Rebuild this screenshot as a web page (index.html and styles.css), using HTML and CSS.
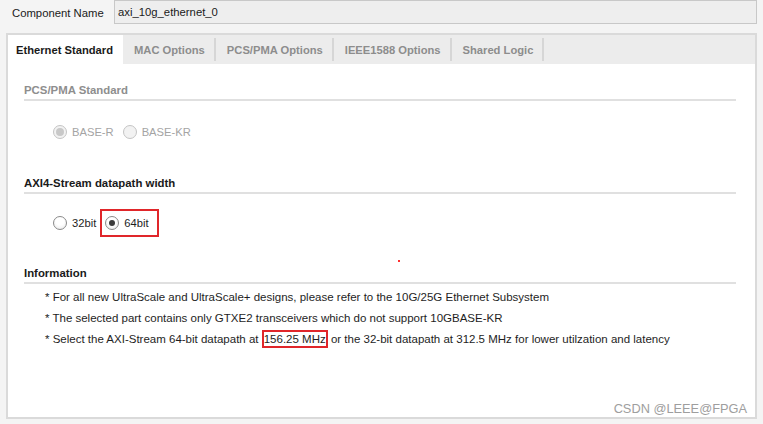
FILE: index.html
```html
<!DOCTYPE html>
<html>
<head>
<meta charset="utf-8">
<link rel="stylesheet" href="styles.css">
</head>
<body>
<div class="page">
  <div class="name-row">
    <span class="name-label">Component Name</span>
    <div class="name-input">axi_10g_ethernet_0</div>
  </div>
  <div class="panel">
    <div class="tabbar">
      <div class="tab active">Ethernet Standard</div>
      <div class="tab">MAC Options</div>
      <div class="tab">PCS/PMA Options</div>
      <div class="tab">IEEE1588 Options</div>
      <div class="tab">Shared Logic</div>
    </div>
    <div class="content">
      <div class="group disabled">
        <div class="group-title">PCS/PMA Standard</div>
        <div class="radios first">
          <span class="radio checked"><span class="dot"></span>BASE-R</span>
          <span class="radio"><span class="dot"></span>BASE-KR</span>
        </div>
      </div>
      <div class="group">
        <div class="group-title">AXI4-Stream datapath width</div>
        <div class="radios second">
          <span class="radio"><span class="dot"></span>32bit</span>
          <span class="radio checked boxed"><span class="dot"></span>64bit</span>
        </div>
      </div>
      <div class="group info">
        <div class="group-title">Information</div>
        <div class="info-lines">
          <p>* For all new UltraScale and UltraScale+ designs, please refer to the 10G/25G Ethernet Subsystem</p>
          <p>* The selected part contains only GTXE2 transceivers which do not support 10GBASE-KR</p>
          <p>* Select the AXI-Stream 64-bit datapath at <span class="hl">156.25 MHz</span> or the 32-bit datapath at 312.5 MHz for lower utilzation and latency</p>
        </div>
      </div>
    </div>
  </div>
  <span class="red-dot"></span>
  <div class="watermark">CSDN @LEEE@FPGA</div>
</div>
</body>
</html>
```

FILE: styles.css
```css
html, body {
  margin: 0;
  padding: 0;
}
body {
  background: #f4f4f4;
  font-family: "Liberation Sans", Arial, sans-serif;
  font-size: 11px;
  color: #1e1e1e;
}
.page {
  position: relative;
  width: 763px;
  height: 424px;
  overflow: hidden;
}
.name-row {
  display: flex;
  align-items: center;
  height: 25px;
  padding: 0 6px 0 12px;
}
.name-label {
  width: 102px;
  font-size: 11.3px;
  color: #1a1a1a;
}
.name-input {
  flex: 1;
  height: 24px;
  box-sizing: border-box;
  border: 1px solid #c8c8c8;
  background: #eeeeee;
  padding-left: 3px;
  line-height: 22px;
  font-size: 11.3px;
  color: #1a1a1a;
  align-self: flex-start;
}
.panel {
  margin: 8px 6px 0 6px;
  height: 386px;
  box-sizing: border-box;
  border: 2px solid #dadada;
  background: #ffffff;
  display: flex;
  flex-direction: column;
}
.tabbar {
  display: flex;
  height: 29px;
  background: #ececec;
  flex-shrink: 0;
}
.tab {
  display: flex;
  align-items: center;
  padding: 0 11px 0 11px;
  font-weight: bold;
  font-size: 11.2px;
  color: #8d8d8d;
  position: relative;
}
.tab::after {
  content: "";
  position: absolute;
  right: 0;
  top: 3px;
  bottom: 3px;
  width: 2px;
  background: #d6d6d6;
}
.tab.active {
  background: #ffffff;
  color: #1a1a1a;
  padding: 0 10px 0 8px;
}
.tab.active::after {
  display: none;
}
.content {
  flex: 1;
  padding: 19px 19px 0 16px;
}
.group-title {
  font-weight: bold;
  font-size: 11.4px;
  line-height: 14px;
  padding-bottom: 2px;
  border-bottom: 2px solid #e0e0e0;
  color: #1a1a1a;
}
.group.disabled .group-title {
  color: #8e8e8e;
}
.radios {
  display: flex;
  margin-left: 24px;
}
.radios.first {
  margin-top: 17px;
  margin-bottom: 30px;
}
.radios.second {
  margin-top: 15px;
}
.radio {
  display: inline-flex;
  align-items: center;
  gap: 5px;
  padding: 5px 2px 5px 3px;
  border: 2px solid transparent;
  line-height: 14px;
  font-size: 11.2px;
  color: #1e1e1e;
}
.group.disabled .radio {
  color: #a4a4a4;
}
.radio.boxed {
  border-color: #e0262a;
  padding-right: 8px;
}
.dot {
  width: 14px;
  height: 14px;
  box-sizing: border-box;
  border-radius: 50%;
  border: 1px solid #8a8a8a;
  background: radial-gradient(circle at 50% 35%, #ffffff 40%, #e6e6e6 100%);
  display: flex;
  align-items: center;
  justify-content: center;
}
.radio.checked .dot::after {
  content: "";
  width: 6px;
  height: 6px;
  border-radius: 50%;
  background: #3a3a3a;
}
.group.disabled .dot {
  border-color: #c4c4c4;
  background: #f2f2f2;
}
.group.disabled .radio.checked .dot::after {
  width: 8px;
  height: 8px;
  background: #c8c8c8;
}
.group.info {
  margin-top: 29px;
}
.info-lines {
  margin-top: 3px;
  padding-left: 21px;
}
.info-lines p {
  margin: 0;
  line-height: 21px;
  font-size: 11.5px;
  color: #1e1e1e;
}
.hl {
  border: 2px solid #e0262a;
  padding: 1px 0 1px 0;
}
.red-dot {
  position: absolute;
  left: 398px;
  top: 260px;
  width: 2px;
  height: 2px;
  background: #ff3030;
}
.watermark {
  position: absolute;
  right: 16px;
  top: 400px;
  font-size: 12.8px;
  line-height: 18px;
  color: #9e9e9e;
}
```
